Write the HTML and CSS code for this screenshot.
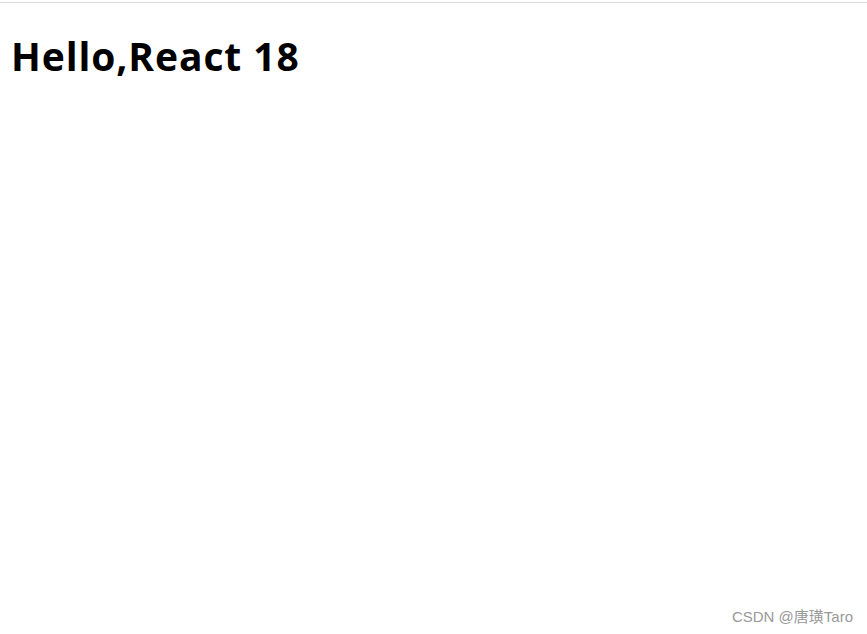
FILE: index.html
```html
<!DOCTYPE html>
<html>
<head>
<meta charset="utf-8">
<link rel="stylesheet" href="styles.css">
</head>
<body>
<div class="page">
  <div class="topline"></div>
  <h1 class="title">Hello,React 18</h1>
</div>
<div class="watermark">CSDN @唐璜Taro</div>
</body>
</html>
```
FILE: styles.css
```css
html, body {
  margin: 0;
  padding: 0;
  background: #fff;
  height: 100%;
}
.page {
  padding-top: 2px;
}
.topline {
  height: 1px;
  background: #dcdcdc;
}
.title {
  margin: 0;
  padding: 28px 0 0 11px;
  font-family: "Open Sans", "Noto Sans", sans-serif;
  font-weight: 700;
  font-size: 39px;
  line-height: 50px;
  color: #000;
  letter-spacing: 0.9px;
}
.watermark {
  position: absolute;
  right: 14px;
  bottom: 8px;
  font-family: "Liberation Sans", "Noto Sans CJK SC", sans-serif;
  font-size: 15px;
  color: #999;
}
```
